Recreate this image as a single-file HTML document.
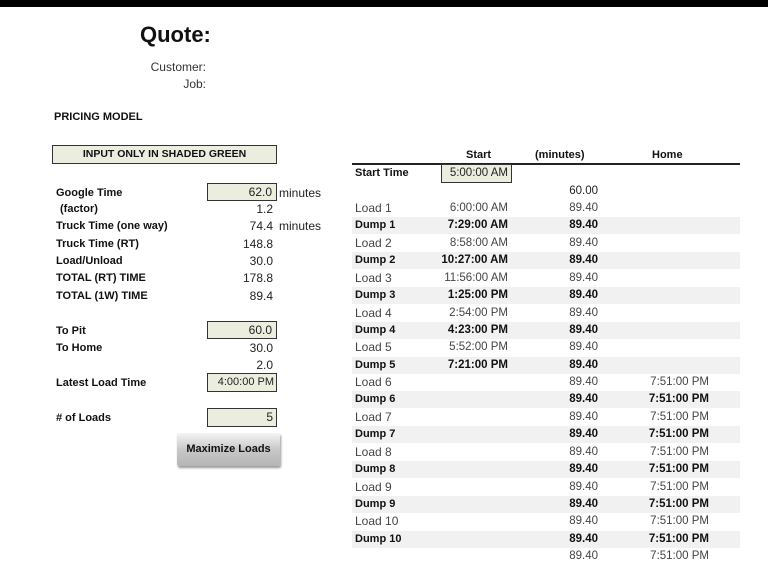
<!DOCTYPE html>
<html><head><meta charset="utf-8"><style>
body{margin:0;width:768px;height:570px;background:#fff;position:relative;overflow:hidden;font-family:"Liberation Sans",sans-serif;font-size:12px;color:#222}
div{position:absolute;white-space:nowrap;line-height:14px}
.b{font-weight:bold;color:#111;font-size:11px}
.r{text-align:right}
.g{background:#ebeedf;border:1px solid #333;box-sizing:border-box}
.row{left:352px;width:388px;height:17px}
.sh{background:#f1f1f1}
.lab{left:355px}
.c1{left:400px;width:108px;text-align:right;font-size:11.5px}
.c2{left:500px;width:98px;text-align:right;font-size:11.5px}
.c3{left:600px;width:109px;text-align:right;font-size:11.5px}
.c1.b,.c2.b,.c3.b{font-size:11.5px}
.ld{color:#444}
</style></head><body>
<div style="left:0;top:0;width:768px;height:7px;background:#000"></div>
<div class="b" style="left:140px;top:21px;font-size:22px;line-height:28px">Quote:</div>
<div class="r" style="left:100px;width:106px;top:60px;color:#333">Customer:</div>
<div class="r" style="left:100px;width:106px;top:77px;color:#333">Job:</div>
<div class="b" style="left:54px;top:110px">PRICING MODEL</div>
<div class="g b" style="left:52px;top:145px;width:225px;height:19px;text-align:center;line-height:16px;font-size:10.5px">INPUT ONLY IN SHADED GREEN</div>

<div class="b" style="left:56px;top:186px">Google Time</div>
<div class="g r" style="left:207px;top:183px;width:70px;height:18px;padding-right:4px;line-height:16px">62.0</div>
<div style="left:279px;top:186px">minutes</div>
<div class="b" style="left:60px;top:202px">(factor)</div><div class="r" style="left:200px;width:73px;top:202px">1.2</div>
<div class="b" style="left:56px;top:219px">Truck Time (one way)</div><div class="r" style="left:200px;width:73px;top:219px">74.4</div><div style="left:279px;top:219px">minutes</div>
<div class="b" style="left:56px;top:237px">Truck Time (RT)</div><div class="r" style="left:200px;width:73px;top:237px">148.8</div>
<div class="b" style="left:56px;top:254px">Load/Unload</div><div class="r" style="left:200px;width:73px;top:254px">30.0</div>
<div class="b" style="left:56px;top:271px">TOTAL (RT) TIME</div><div class="r" style="left:200px;width:73px;top:271px">178.8</div>
<div class="b" style="left:56px;top:289px">TOTAL (1W) TIME</div><div class="r" style="left:200px;width:73px;top:289px">89.4</div>

<div class="b" style="left:56px;top:324px">To Pit</div>
<div class="g r" style="left:207px;top:321px;width:70px;height:18px;padding-right:4px;line-height:16px">60.0</div>
<div class="b" style="left:56px;top:341px">To Home</div><div class="r" style="left:200px;width:73px;top:341px">30.0</div>
<div class="r" style="left:200px;width:73px;top:358px">2.0</div>
<div class="b" style="left:56px;top:376px">Latest Load Time</div>
<div class="g r" style="left:207px;top:373px;width:70px;height:19px;padding-right:2px;line-height:17px;font-size:11px">4:00:00 PM</div>
<div class="b" style="left:56px;top:411px">&#35; of Loads</div>
<div class="g r" style="left:207px;top:408px;width:70px;height:19px;padding-right:3px;line-height:17px">5</div>
<div class="b" style="left:177px;top:433px;width:103px;height:33px;line-height:33px;text-align:center;background:linear-gradient(#f4f4f4,#c8c8c8 50%,#b5b5b5);box-shadow:1px 2px 2px #999;border-radius:2px">Maximize Loads</div>

<div class="b" style="left:466px;top:148px">Start</div>
<div class="b" style="left:535px;top:148px">(minutes)</div>
<div class="b" style="left:652px;top:148px">Home</div>
<div style="left:352px;top:163px;width:388px;height:2px;background:#222"></div>
<div class="b lab" style="top:166px">Start Time</div>
<div class="g r" style="left:441px;top:164px;width:71px;height:19px;padding-right:3px;line-height:17px;font-size:11.5px">5:00:00 AM</div>

<div class="c2" style="top:184px">60.00</div>
<div class="lab ld" style="top:201px">Load 1</div><div class="c1 ld" style="top:201px">6:00:00 AM</div><div class="c2 ld" style="top:201px">89.40</div>
<div class="row sh" style="top:217px"></div><div class="lab b" style="top:218px">Dump 1</div><div class="c1 b" style="top:218px">7:29:00 AM</div><div class="c2 b" style="top:218px">89.40</div>
<div class="lab ld" style="top:236px">Load 2</div><div class="c1 ld" style="top:236px">8:58:00 AM</div><div class="c2 ld" style="top:236px">89.40</div>
<div class="row sh" style="top:252px"></div><div class="lab b" style="top:253px">Dump 2</div><div class="c1 b" style="top:253px">10:27:00 AM</div><div class="c2 b" style="top:253px">89.40</div>
<div class="lab ld" style="top:271px">Load 3</div><div class="c1 ld" style="top:271px">11:56:00 AM</div><div class="c2 ld" style="top:271px">89.40</div>
<div class="row sh" style="top:287px"></div><div class="lab b" style="top:288px">Dump 3</div><div class="c1 b" style="top:288px">1:25:00 PM</div><div class="c2 b" style="top:288px">89.40</div>
<div class="lab ld" style="top:306px">Load 4</div><div class="c1 ld" style="top:306px">2:54:00 PM</div><div class="c2 ld" style="top:306px">89.40</div>
<div class="row sh" style="top:322px"></div><div class="lab b" style="top:323px">Dump 4</div><div class="c1 b" style="top:323px">4:23:00 PM</div><div class="c2 b" style="top:323px">89.40</div>
<div class="lab ld" style="top:340px">Load 5</div><div class="c1 ld" style="top:340px">5:52:00 PM</div><div class="c2 ld" style="top:340px">89.40</div>
<div class="row sh" style="top:357px"></div><div class="lab b" style="top:358px">Dump 5</div><div class="c1 b" style="top:358px">7:21:00 PM</div><div class="c2 b" style="top:358px">89.40</div>
<div class="lab ld" style="top:375px">Load 6</div><div class="c2 ld" style="top:375px">89.40</div><div class="c3 ld" style="top:375px">7:51:00 PM</div>
<div class="row sh" style="top:391px"></div><div class="lab b" style="top:392px">Dump 6</div><div class="c2 b" style="top:392px">89.40</div><div class="c3 b" style="top:392px">7:51:00 PM</div>
<div class="lab ld" style="top:410px">Load 7</div><div class="c2 ld" style="top:410px">89.40</div><div class="c3 ld" style="top:410px">7:51:00 PM</div>
<div class="row sh" style="top:426px"></div><div class="lab b" style="top:427px">Dump 7</div><div class="c2 b" style="top:427px">89.40</div><div class="c3 b" style="top:427px">7:51:00 PM</div>
<div class="lab ld" style="top:445px">Load 8</div><div class="c2 ld" style="top:445px">89.40</div><div class="c3 ld" style="top:445px">7:51:00 PM</div>
<div class="row sh" style="top:461px"></div><div class="lab b" style="top:462px">Dump 8</div><div class="c2 b" style="top:462px">89.40</div><div class="c3 b" style="top:462px">7:51:00 PM</div>
<div class="lab ld" style="top:480px">Load 9</div><div class="c2 ld" style="top:480px">89.40</div><div class="c3 ld" style="top:480px">7:51:00 PM</div>
<div class="row sh" style="top:496px"></div><div class="lab b" style="top:497px">Dump 9</div><div class="c2 b" style="top:497px">89.40</div><div class="c3 b" style="top:497px">7:51:00 PM</div>
<div class="lab ld" style="top:514px">Load 10</div><div class="c2 ld" style="top:514px">89.40</div><div class="c3 ld" style="top:514px">7:51:00 PM</div>
<div class="row sh" style="top:531px"></div><div class="lab b" style="top:532px">Dump 10</div><div class="c2 b" style="top:532px">89.40</div><div class="c3 b" style="top:532px">7:51:00 PM</div>
<div class="c2 ld" style="top:549px">89.40</div><div class="c3 ld" style="top:549px">7:51:00 PM</div>
</body></html>
